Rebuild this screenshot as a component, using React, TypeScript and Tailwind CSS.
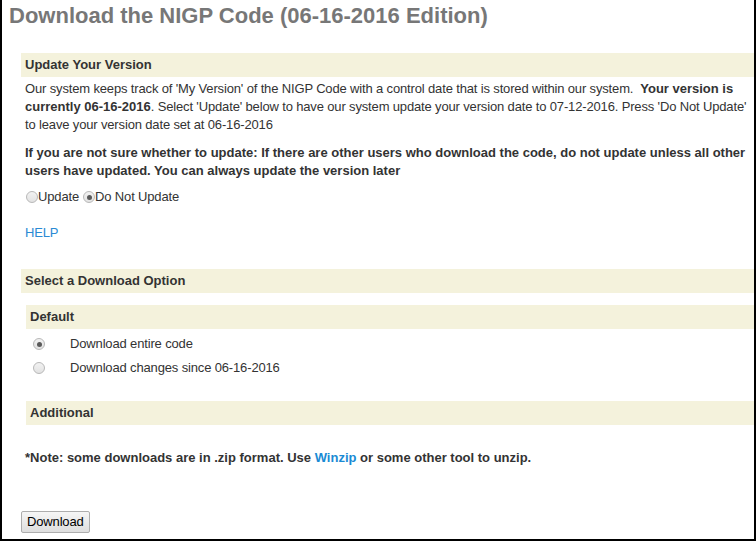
import React from "react";

function Radio({ checked }: { checked?: boolean }) {
  return (
    <span className="inline-flex h-[12px] w-[12px] items-center justify-center rounded-full border border-[#b8b8b8] bg-gradient-to-b from-[#f2f2f2] to-[#e2e2e2] align-middle">
      {checked ? <span className="h-[5px] w-[5px] rounded-full bg-[#5a5a5a]" /> : null}
    </span>
  );
}

export default function App() {
  return (
    <div
      className="h-[541px] w-[756px] overflow-hidden border-x-2 border-b-2 border-black bg-white text-[13px] text-[#333]"
      style={{ fontFamily: '"Liberation Sans", Arial, sans-serif' }}
    >
      <h1 className="pl-[7px] pt-[2px] text-[22px] font-bold leading-[28px] text-[#777]">
        Download the NIGP Code (06-16-2016 Edition)
      </h1>
      <div className="pl-[19px]">
        <div className="mt-[23px] h-[24px] bg-[#f4f2dc] pl-[4px] font-bold leading-[24px]">Update Your Version</div>
        <p className="mt-[3px] pl-[4px] pr-[4px] leading-[18px] tracking-[-0.15px]">
          Our system keeps track of 'My Version' of the NIGP Code with a control date that is stored within our system.&nbsp;{" "}
          <b className="tracking-normal">Your version is currently 06-16-2016</b>. Select 'Update' below to have our system update your version date to
          07-12-2016. Press 'Do Not Update' to leave your version date set at 06-16-2016
        </p>
        <p className="mt-[10px] pl-[4px] pr-[4px] font-bold leading-[18px]">
          If you are not sure whether to update: If there are other users who download the code, do not update unless all
          other users have updated. You can always update the version later
        </p>
        <div className="mt-[8px] flex items-center pl-[5px] leading-[18px] tracking-[-0.15px]">
          <Radio />
          <span>Update</span>
          <span className="ml-[4px]"></span>
          <Radio checked />
          <span>Do Not Update</span>
        </div>
        <div className="mt-[18px] pl-[4px] leading-[18px] tracking-[-0.15px] text-[#2a8ad4]">HELP</div>
        <div className="mt-[27px] h-[24px] bg-[#f4f2dc] pl-[4px] font-bold leading-[24px]">Select a Download Option</div>
        <div className="pl-[5px]">
          <div className="mt-[12px] h-[24px] bg-[#f4f2dc] pl-[4px] font-bold leading-[24px]">Default</div>
          <div className="mt-[3px] flex h-[24px] items-center tracking-[-0.15px]">
            <span className="ml-[7px] mr-[25px] flex"><Radio checked /></span>
            <span>Download entire code</span>
          </div>
          <div className="flex h-[24px] items-center tracking-[-0.15px]">
            <span className="ml-[7px] mr-[25px] flex"><Radio /></span>
            <span>Download changes since 06-16-2016</span>
          </div>
          <div className="mt-[21px] h-[24px] bg-[#f4f2dc] pl-[4px] font-bold leading-[24px]">Additional</div>
        </div>
        <p className="mt-[24px] pl-[4px] font-bold leading-[18px]">
          *Note: some downloads are in .zip format. Use <span className="text-[#1a8ad4]">Winzip</span> or some other tool to
          unzip.
        </p>
        <button className="mt-[44px] h-[22px] rounded-[2px] border border-[#adadad] bg-gradient-to-b from-[#f6f6f6] to-[#dedede] px-[5px] text-[13px] leading-[20px] tracking-[-0.15px] text-black">
          Download
        </button>
      </div>
    </div>
  );
}
